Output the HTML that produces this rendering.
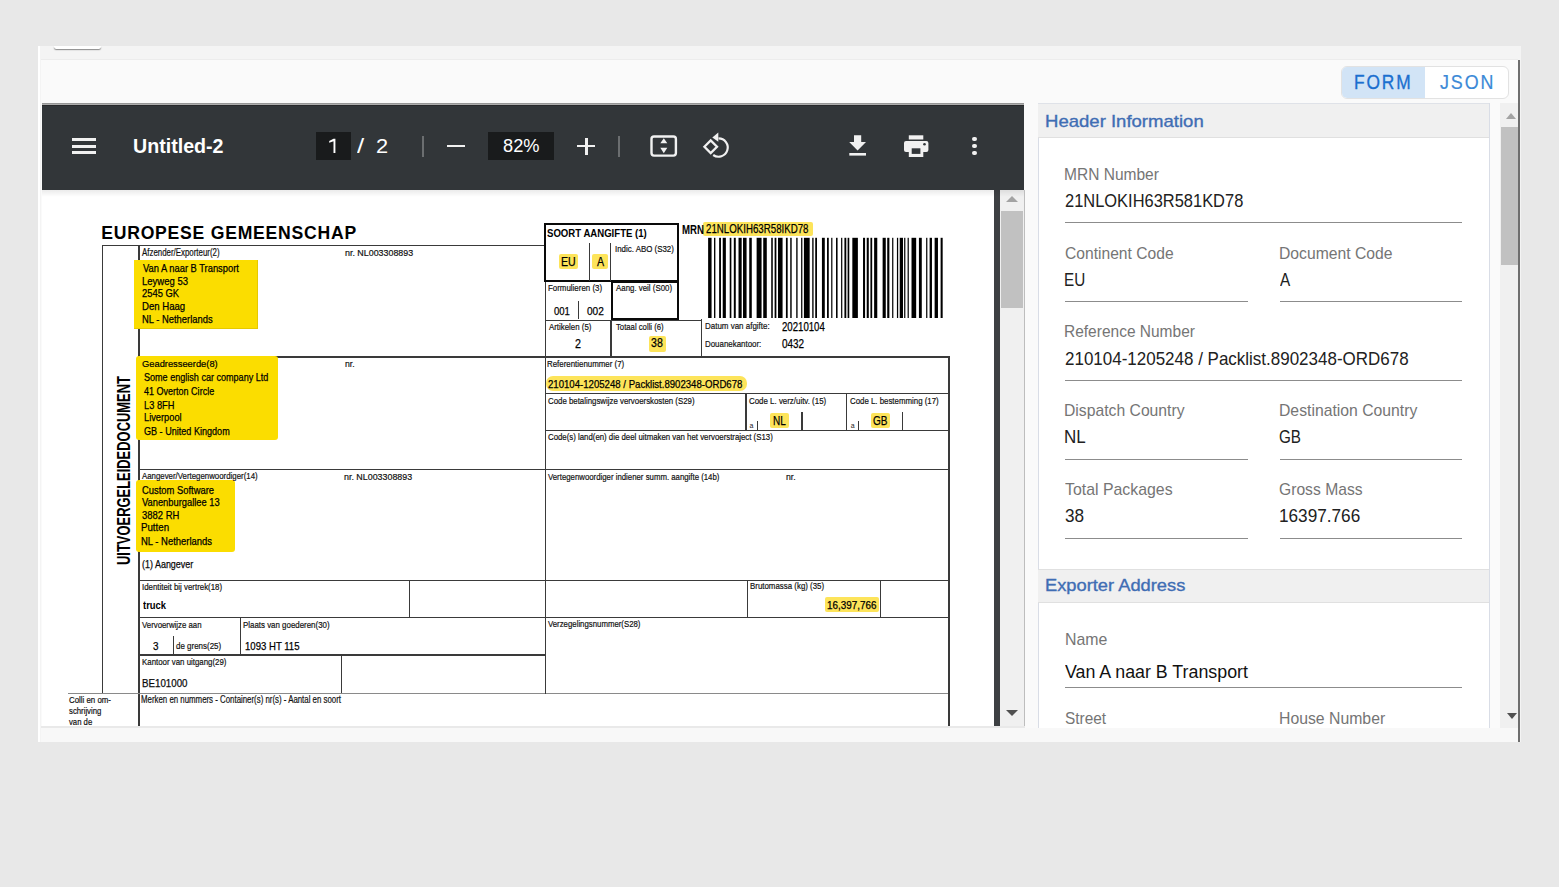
<!DOCTYPE html>
<html><head><meta charset="utf-8"><style>
html,body{margin:0;padding:0;}
body{width:1559px;height:887px;background:#e8e8e8;position:relative;overflow:hidden;font-family:"Liberation Sans",sans-serif;}
.r{position:absolute;box-sizing:border-box;}
svg.r{box-sizing:content-box;}
.t{position:absolute;white-space:nowrap;transform-origin:0 50%;}
</style></head><body>
<div class="r" style="left:38px;top:46px;width:1483px;height:696px;background:#f4f4f4;"></div>
<div class="r" style="left:38px;top:46px;width:2px;height:696px;background:#ffffff;"></div>
<div class="r" style="left:41px;top:59px;width:1477px;height:1px;background:#ececec;"></div>
<div class="r" style="left:41px;top:60px;width:1477px;height:668px;background:#fafafa;"></div>
<div class="r" style="left:41px;top:728px;width:1477px;height:14px;background:#f8f8f8;"></div>
<div class="r" style="left:1518px;top:60px;width:2px;height:682px;background:#6e6e6e;"></div>
<div class="r" style="left:54.3px;top:46px;width:46.4px;height:3.4px;background:#fff;border-radius:0 0 2.5px 2.5px;box-shadow:0 1px 1.2px rgba(0,0,0,.45);"></div>
<div class="r" style="left:1340.5px;top:66px;width:168px;height:32.7px;background:#fff;border:1px solid #e2e2e2;border-radius:6px;overflow:hidden"><div style="position:absolute;left:0;top:0;width:83.5px;height:31px;background:#d2e4f6"></div></div>
<div class="t" style="left:1354.41px;top:70.29px;font-size:20.4px;line-height:24.48px;color:#1b6fcf;letter-spacing:2.2px;transform:scaleX(0.8498);-webkit-text-stroke:0.35px #1b6fcf">FORM</div>
<div class="t" style="left:1439.53px;top:70.29px;font-size:20.4px;line-height:24.48px;color:#3b89d7;letter-spacing:2.2px;transform:scaleX(0.8759);-webkit-text-stroke:0.2px #3b89d7">JSON</div>
<div class="r" style="left:42px;top:103px;width:982px;height:1px;background:#959595;"></div>
<div class="r" style="left:42px;top:104px;width:982px;height:1px;background:#adadad;"></div>
<div class="r" style="left:42px;top:105px;width:982px;height:1px;background:#28292b;"></div>
<div class="r" style="left:42px;top:106px;width:982px;height:84px;background:#323639;"></div>
<div class="r" style="left:42px;top:190px;width:952px;height:536px;background:#ffffff;"></div>
<div class="r" style="left:994px;top:190px;width:6px;height:536px;background:#3d4043;"></div>
<div class="r" style="left:1000px;top:190px;width:24px;height:536px;background:#f0f0f0;"></div>
<div class="r" style="left:1024px;top:190px;width:1px;height:536px;background:#bdbdbd;"></div>
<div class="r" style="left:41px;top:726px;width:984px;height:2px;background:#e9e9e9;"></div>
<div class="r" style="left:1001px;top:211px;width:22px;height:97px;background:#c1c1c1;"></div>
<div class="r" style="left:42px;top:190px;width:982px;height:7px;background:transparent;background:linear-gradient(rgba(0,0,0,.08),rgba(0,0,0,0));"></div>
<div class="r" style="left:1006px;top:196px;width:0;height:0;border-left:6px solid transparent;border-right:6px solid transparent;border-bottom:6px solid #a3a3a3"></div>
<div class="r" style="left:1006px;top:710px;width:0;height:0;border-left:6px solid transparent;border-right:6px solid transparent;border-top:6px solid #505050"></div>
<div class="r" style="left:72px;top:138px;width:24px;height:3px;background:#f1f1f1;"></div>
<div class="r" style="left:72px;top:145px;width:24px;height:3px;background:#f1f1f1;"></div>
<div class="r" style="left:72px;top:151px;width:24px;height:3px;background:#f1f1f1;"></div>
<div class="t" style="left:132.82px;top:133.67px;font-size:20px;line-height:24.00px;color:#fff;transform:scaleX(0.9812);font-weight:bold;">Untitled-2</div>
<div class="r" style="left:316px;top:132px;width:35px;height:28px;background:#191b1c;"></div>
<svg class="r" style="left:326px;top:136px" width="12" height="20" viewBox="0 0 12 20"><path d="M7.5 2.7 h1.9 v14.4 h-1.9 v-11.9 l-4.3 1.6 v-1.7z" fill="#fff"/></svg>
<div class="t" style="left:356.80px;top:134.94px;font-size:19.5px;line-height:23.40px;color:#fff;transform:scaleX(1.3187);">/</div>
<div class="t" style="left:375.91px;top:134.94px;font-size:19.5px;line-height:23.40px;color:#fff;transform:scaleX(1.1158);">2</div>
<div class="r" style="left:422px;top:136px;width:2px;height:21px;background:#6b6e70;"></div>
<div class="r" style="left:447.3px;top:144.5px;width:17.4px;height:2px;background:#f1f1f1;"></div>
<div class="r" style="left:488px;top:132px;width:66px;height:28px;background:#191b1c;"></div>
<div class="t" style="left:503.18px;top:135.96px;font-size:18px;line-height:21.60px;color:#fff;transform:scaleX(1.0127);">82%</div>
<div class="r" style="left:577px;top:144.5px;width:18px;height:2.5px;background:#f1f1f1;"></div>
<div class="r" style="left:585px;top:137.5px;width:2.5px;height:17px;background:#f1f1f1;"></div>
<div class="r" style="left:618px;top:136px;width:2px;height:21px;background:#6b6e70;"></div>
<svg class="r" style="left:645px;top:130px" width="36" height="32" viewBox="0 0 36 32"><rect x="6.5" y="6.5" width="24.4" height="19.1" rx="2.5" fill="none" stroke="#f1f1f1" stroke-width="2.4"/><path d="M18.8 8.2 l-3.5 5.1 h7z M18.8 23.3 l-3.5 -5.5 h7z" fill="#f1f1f1"/></svg>
<svg class="r" style="left:700px;top:130px" width="32" height="32" viewBox="0 0 32 32"><path d="M4.4 16.8 L10.7 10.5 L17 16.8 L10.7 23.1 Z" fill="none" stroke="#f1f1f1" stroke-width="2.3"/><path d="M18.5 8.3 A 9.2 9.2 0 1 1 13.2 25" fill="none" stroke="#f1f1f1" stroke-width="2.2"/><path d="M18.3 2.5 L12.3 7.6 L18.3 11.8 Z" fill="#f1f1f1"/></svg>
<svg class="r" style="left:845px;top:133px" width="26" height="26" viewBox="0 0 26 26"><path d="M9 2.3 h7.2 v6.6 h4.8 l-8.4 8.6 l-8.4 -8.6 h4.8z" fill="#f1f1f1"/><rect x="4.3" y="20" width="16.7" height="2.6" fill="#f1f1f1"/></svg>
<svg class="r" style="left:902px;top:133px" width="30" height="26" viewBox="0 0 30 26"><rect x="6.8" y="2.3" width="14.5" height="4.2" fill="#f1f1f1"/><rect x="2" y="7.9" width="24.4" height="11.1" rx="2" fill="#f1f1f1"/><rect x="6.8" y="13" width="14.5" height="11" fill="#f1f1f1"/><rect x="9.7" y="15.3" width="8.7" height="5.6" fill="#323639"/><circle cx="22.5" cy="11.3" r="1.3" fill="#323639"/></svg>
<div class="r" style="left:972px;top:136.8px;width:4.6px;height:4.6px;border-radius:50%;background:#f1f1f1"></div>
<div class="r" style="left:972px;top:143.8px;width:4.6px;height:4.6px;border-radius:50%;background:#f1f1f1"></div>
<div class="r" style="left:972px;top:150.8px;width:4.6px;height:4.6px;border-radius:50%;background:#f1f1f1"></div>
<div class="t" style="left:101.26px;top:222.84px;font-size:17.6px;line-height:21.12px;color:#000;letter-spacing:0.76px;font-weight:bold;">EUROPESE GEMEENSCHAP</div>
<div class="r" style="left:102px;top:245px;width:443px;height:1px;background:#3a3a3a;"></div>
<div class="r" style="left:101.5px;top:245px;width:1.5px;height:448px;background:#3a3a3a;"></div>
<div class="r" style="left:138px;top:245px;width:1.5px;height:481px;background:#3a3a3a;"></div>
<div class="r" style="left:139px;top:356.2px;width:810px;height:1.4px;background:#3a3a3a;"></div>
<div class="r" style="left:139px;top:468.8px;width:810px;height:1.4px;background:#3a3a3a;"></div>
<div class="r" style="left:139px;top:579.8px;width:810px;height:1.4px;background:#3a3a3a;"></div>
<div class="r" style="left:746.5px;top:579.8px;width:1.4px;height:37.700000000000045px;background:#3a3a3a;"></div>
<div class="r" style="left:879.5px;top:579.8px;width:1.4px;height:37.700000000000045px;background:#3a3a3a;"></div>
<div class="r" style="left:409px;top:580px;width:1.4px;height:38px;background:#3a3a3a;"></div>
<div class="r" style="left:139px;top:616.9px;width:810px;height:1.4px;background:#3a3a3a;"></div>
<div class="r" style="left:240px;top:617px;width:1.4px;height:38px;background:#3a3a3a;"></div>
<div class="r" style="left:173px;top:636.2px;width:1.4px;height:18.799999999999955px;background:#3a3a3a;"></div>
<div class="r" style="left:139px;top:654.2px;width:406px;height:1.4px;background:#3a3a3a;"></div>
<div class="r" style="left:341px;top:655px;width:1.4px;height:38.5px;background:#3a3a3a;"></div>
<div class="r" style="left:68px;top:693px;width:881px;height:1px;background:#8a8a8a;"></div>
<div class="r" style="left:948px;top:356px;width:1.5px;height:370px;background:#3a3a3a;"></div>
<div class="r" style="left:544.5px;top:245px;width:1.4px;height:448.5px;background:#3a3a3a;"></div>
<div class="r" style="left:544.4px;top:223px;width:134.6px;height:59px;border:2px solid #0a0a0a"></div>
<div class="r" style="left:589.2px;top:243px;width:1.2px;height:38px;background:#3a3a3a;"></div>
<div class="r" style="left:610.3px;top:243px;width:1.2px;height:38px;background:#3a3a3a;"></div>
<div class="r" style="left:610.8px;top:280.8px;width:68px;height:39px;border:2px solid #0a0a0a"></div>
<div class="r" style="left:577.6px;top:301.3px;width:1.3px;height:18.19999999999999px;background:#3a3a3a;"></div>
<div class="r" style="left:545px;top:319.5px;width:156.5px;height:1.2px;background:#3a3a3a;"></div>
<div class="r" style="left:610.2px;top:319.5px;width:1.4px;height:37.0px;background:#3a3a3a;"></div>
<div class="r" style="left:700.8px;top:319px;width:1.5px;height:37.5px;background:#3a3a3a;"></div>
<div class="r" style="left:545px;top:393px;width:404px;height:1.4px;background:#3a3a3a;"></div>
<div class="r" style="left:745.2px;top:393px;width:1.4px;height:37.5px;background:#3a3a3a;"></div>
<div class="r" style="left:757px;top:421.3px;width:1.3px;height:8.699999999999989px;background:#3a3a3a;"></div>
<div class="r" style="left:801.2px;top:412.2px;width:1.4px;height:17.80000000000001px;background:#3a3a3a;"></div>
<div class="r" style="left:846.1px;top:393px;width:1.4px;height:37.5px;background:#3a3a3a;"></div>
<div class="r" style="left:858px;top:421.3px;width:1.3px;height:8.699999999999989px;background:#3a3a3a;"></div>
<div class="r" style="left:901.8px;top:412.2px;width:1.4px;height:17.80000000000001px;background:#3a3a3a;"></div>
<div class="r" style="left:545px;top:429.8px;width:404px;height:1.4px;background:#3a3a3a;"></div>
<div class="r" style="left:134.3px;top:260px;width:123.7px;height:69.4px;background:#fbdd00;box-shadow:inset -1px -1px 0 #e6c900"></div>
<div class="r" style="left:135.5px;top:356.2px;width:142.3px;height:84.3px;background:#fbdd00;border-radius:3px"></div>
<div class="r" style="left:135.5px;top:480.1px;width:99.6px;height:71.9px;background:#fbdd00;border-radius:3px"></div>
<div class="r" style="left:546px;top:376.2px;width:201px;height:15.3px;background:#fde45a;border-radius:7px"></div>
<div class="r" style="left:703px;top:221.8px;width:109.5px;height:14.6px;background:#fde45a;border-radius:2px"></div>
<div class="r" style="left:559.2px;top:254.1px;width:19px;height:14.8px;background:#fde45a;border-radius:2px"></div>
<div class="r" style="left:592.2px;top:254.1px;width:16.3px;height:14.8px;background:#fde45a;border-radius:2px"></div>
<div class="r" style="left:649px;top:336.1px;width:16.5px;height:15.6px;background:#fde45a;border-radius:2px"></div>
<div class="r" style="left:769.6px;top:413.2px;width:19.1px;height:15.2px;background:#fde45a;border-radius:2px"></div>
<div class="r" style="left:871.3px;top:413.2px;width:18.9px;height:15.2px;background:#fde45a;border-radius:2px"></div>
<div class="r" style="left:825.2px;top:597.3px;width:54.2px;height:14.8px;background:#fde45a;border-radius:2px"></div>
<div class="t" style="left:142.00px;top:246.93px;font-size:10.000000000000002px;line-height:12.00px;color:#1a1a1a;transform:scaleX(0.7887);-webkit-text-stroke:0.2px #000;">Afzender/Exporteur(2)</div>
<div class="t" style="left:344.62px;top:246.98px;font-size:9.420289855072465px;line-height:11.30px;color:#1a1a1a;transform:scaleX(0.9444);-webkit-text-stroke:0.2px #000;">nr. NL003308893</div>
<div class="t" style="left:142.75px;top:261.84px;font-size:11.159420289855074px;line-height:13.39px;color:#000;transform:scaleX(0.8380);-webkit-text-stroke:0.25px #000;">Van A naar B Transport</div>
<div class="t" style="left:142.04px;top:274.62px;font-size:11.159420289855074px;line-height:13.39px;color:#000;transform:scaleX(0.8552);-webkit-text-stroke:0.25px #000;">Leyweg 53</div>
<div class="t" style="left:142.33px;top:287.40px;font-size:11.159420289855074px;line-height:13.39px;color:#000;transform:scaleX(0.8419);-webkit-text-stroke:0.25px #000;">2545 GK</div>
<div class="t" style="left:142.03px;top:300.18px;font-size:11.159420289855074px;line-height:13.39px;color:#000;transform:scaleX(0.8601);-webkit-text-stroke:0.25px #000;">Den Haag</div>
<div class="t" style="left:142.05px;top:312.96px;font-size:11.159420289855074px;line-height:13.39px;color:#000;transform:scaleX(0.8423);-webkit-text-stroke:0.25px #000;">NL - Netherlands</div>
<div class="t" style="left:547.21px;top:225.79px;font-size:11.73913043478261px;line-height:14.09px;color:#000;transform:scaleX(0.8180);font-weight:bold;">SOORT AANGIFTE (1)</div>
<div class="t" style="left:681.67px;top:222.55px;font-size:11.884057971014492px;line-height:14.26px;color:#000;transform:scaleX(0.8120);font-weight:bold;">MRN</div>
<div class="t" style="left:706.11px;top:222.20px;font-size:12.46376811594203px;line-height:14.96px;color:#000;transform:scaleX(0.7793);-webkit-text-stroke:0.25px #000;">21NLOKIH63R58IKD78</div>
<div class="t" style="left:561.05px;top:254.84px;font-size:12.318840579710146px;line-height:14.78px;color:#000;transform:scaleX(0.8580);-webkit-text-stroke:0.25px #000;">EU</div>
<div class="t" style="left:596.90px;top:254.84px;font-size:12.318840579710146px;line-height:14.78px;color:#000;transform:scaleX(0.8667);-webkit-text-stroke:0.25px #000;">A</div>
<div class="t" style="left:614.79px;top:243.96px;font-size:9.130434782608695px;line-height:10.96px;color:#1a1a1a;transform:scaleX(0.8663);-webkit-text-stroke:0.2px #000;">Indic. ABO (S32)</div>
<div class="t" style="left:548.37px;top:283.20px;font-size:8.985507246376812px;line-height:10.78px;color:#1a1a1a;transform:scaleX(0.8817);-webkit-text-stroke:0.2px #000;">Formulieren (3)</div>
<div class="t" style="left:616.30px;top:283.20px;font-size:8.985507246376812px;line-height:10.78px;color:#1a1a1a;transform:scaleX(0.8777);-webkit-text-stroke:0.2px #000;">Aang. veil (S00)</div>
<div class="t" style="left:553.52px;top:303.69px;font-size:11.73913043478261px;line-height:14.09px;color:#000;transform:scaleX(0.8141);-webkit-text-stroke:0.25px #000;">001</div>
<div class="t" style="left:586.80px;top:303.69px;font-size:11.73913043478261px;line-height:14.09px;color:#000;transform:scaleX(0.8600);-webkit-text-stroke:0.25px #000;">002</div>
<div class="t" style="left:549.00px;top:321.35px;font-size:9.565217391304348px;line-height:11.48px;color:#1a1a1a;transform:scaleX(0.8238);-webkit-text-stroke:0.2px #000;">Artikelen (5)</div>
<div class="t" style="left:616.15px;top:321.35px;font-size:9.565217391304348px;line-height:11.48px;color:#1a1a1a;transform:scaleX(0.8092);-webkit-text-stroke:0.2px #000;">Totaal colli (6)</div>
<div class="t" style="left:575.16px;top:336.50px;font-size:12.46376811594203px;line-height:14.96px;color:#000;transform:scaleX(0.8640);-webkit-text-stroke:0.25px #000;">2</div>
<div class="t" style="left:650.68px;top:336.30px;font-size:12.46376811594203px;line-height:14.96px;color:#000;transform:scaleX(0.8491);-webkit-text-stroke:0.25px #000;">38</div>
<div class="t" style="left:705.16px;top:319.67px;font-size:9.855072463768117px;line-height:11.83px;color:#1a1a1a;transform:scaleX(0.8097);-webkit-text-stroke:0.2px #000;">Datum van afgifte:</div>
<div class="t" style="left:782.02px;top:319.91px;font-size:12.028985507246379px;line-height:14.43px;color:#000;transform:scaleX(0.8009);-webkit-text-stroke:0.25px #000;">20210104</div>
<div class="t" style="left:705.17px;top:338.17px;font-size:9.855072463768117px;line-height:11.83px;color:#1a1a1a;transform:scaleX(0.8036);-webkit-text-stroke:0.2px #000;">Douanekantoor:</div>
<div class="t" style="left:782.10px;top:336.68px;font-size:12.173913043478262px;line-height:14.61px;color:#000;transform:scaleX(0.8176);-webkit-text-stroke:0.25px #000;">0432</div>
<div class="t" style="left:142.43px;top:358.05px;font-size:9.565217391304348px;line-height:11.48px;color:#000;transform:scaleX(0.9769);-webkit-text-stroke:0.2px #000;">Geadresseerde(8)</div>
<div class="t" style="left:143.89px;top:371.45px;font-size:10.724637681159422px;line-height:12.87px;color:#000;transform:scaleX(0.8448);-webkit-text-stroke:0.25px #000;">Some english car company Ltd</div>
<div class="t" style="left:144.12px;top:385.25px;font-size:10.724637681159422px;line-height:12.87px;color:#000;transform:scaleX(0.8412);-webkit-text-stroke:0.25px #000;">41 Overton Circle</div>
<div class="t" style="left:143.56px;top:398.55px;font-size:10.724637681159422px;line-height:12.87px;color:#000;transform:scaleX(0.8651);-webkit-text-stroke:0.25px #000;">L3 8FH</div>
<div class="t" style="left:143.56px;top:411.25px;font-size:10.724637681159422px;line-height:12.87px;color:#000;transform:scaleX(0.8657);-webkit-text-stroke:0.25px #000;">Liverpool</div>
<div class="t" style="left:143.85px;top:424.75px;font-size:10.724637681159422px;line-height:12.87px;color:#000;transform:scaleX(0.8460);-webkit-text-stroke:0.25px #000;">GB - United Kingdom</div>
<div class="t" style="left:344.64px;top:357.95px;font-size:9.565217391304348px;line-height:11.48px;color:#1a1a1a;transform:scaleX(0.9086);-webkit-text-stroke:0.2px #000;">nr.</div>
<div class="t" style="left:142.00px;top:470.76px;font-size:9.130434782608695px;line-height:10.96px;color:#1a1a1a;transform:scaleX(0.8601);-webkit-text-stroke:0.2px #000;">Aangever/Vertegenwoordiger(14)</div>
<div class="t" style="left:344.32px;top:471.38px;font-size:9.420289855072465px;line-height:11.30px;color:#1a1a1a;transform:scaleX(0.9444);-webkit-text-stroke:0.2px #000;">nr. NL003308893</div>
<div class="t" style="left:141.53px;top:484.76px;font-size:10.289855072463768px;line-height:12.35px;color:#000;transform:scaleX(0.9147);-webkit-text-stroke:0.25px #000;">Custom Software</div>
<div class="t" style="left:141.95px;top:497.26px;font-size:10.289855072463768px;line-height:12.35px;color:#000;transform:scaleX(0.9090);-webkit-text-stroke:0.25px #000;">Vanenburgallee 13</div>
<div class="t" style="left:141.62px;top:509.76px;font-size:10.289855072463768px;line-height:12.35px;color:#000;transform:scaleX(0.9197);-webkit-text-stroke:0.25px #000;">3882 RH</div>
<div class="t" style="left:141.22px;top:522.46px;font-size:10.289855072463768px;line-height:12.35px;color:#000;transform:scaleX(0.9453);-webkit-text-stroke:0.25px #000;">Putten</div>
<div class="t" style="left:141.24px;top:535.96px;font-size:10.289855072463768px;line-height:12.35px;color:#000;transform:scaleX(0.9200);-webkit-text-stroke:0.25px #000;">NL - Netherlands</div>
<div class="t" style="left:141.76px;top:557.75px;font-size:10.724637681159422px;line-height:12.87px;color:#111;transform:scaleX(0.8351);-webkit-text-stroke:0.25px #000;">(1) Aangever</div>
<div class="t" style="left:141.79px;top:581.52px;font-size:9.275362318840582px;line-height:11.13px;color:#1a1a1a;transform:scaleX(0.8500);-webkit-text-stroke:0.2px #000;">Identiteit bij vertrek(18)</div>
<div class="t" style="left:142.91px;top:598.57px;font-size:11.01449275362319px;line-height:13.22px;color:#000;transform:scaleX(0.8576);font-weight:bold;">truck</div>
<div class="t" style="left:142.46px;top:618.65px;font-size:9.565217391304348px;line-height:11.48px;color:#1a1a1a;transform:scaleX(0.8189);-webkit-text-stroke:0.2px #000;">Vervoerwijze aan</div>
<div class="t" style="left:243.17px;top:618.65px;font-size:9.565217391304348px;line-height:11.48px;color:#1a1a1a;transform:scaleX(0.8279);-webkit-text-stroke:0.2px #000;">Plaats van goederen(30)</div>
<div class="t" style="left:153.20px;top:640.05px;font-size:10.724637681159422px;line-height:12.87px;color:#000;transform:scaleX(0.9226);-webkit-text-stroke:0.25px #000;">3</div>
<div class="t" style="left:176.28px;top:640.82px;font-size:9.275362318840582px;line-height:11.13px;color:#1a1a1a;transform:scaleX(0.8602);-webkit-text-stroke:0.2px #000;">de grens(25)</div>
<div class="t" style="left:244.68px;top:639.77px;font-size:11.01449275362319px;line-height:13.22px;color:#000;transform:scaleX(0.8713);-webkit-text-stroke:0.25px #000;">1093 HT 115</div>
<div class="t" style="left:141.87px;top:656.05px;font-size:9.565217391304348px;line-height:11.48px;color:#1a1a1a;transform:scaleX(0.8247);-webkit-text-stroke:0.2px #000;">Kantoor van uitgang(29)</div>
<div class="t" style="left:142.22px;top:677.14px;font-size:11.159420289855074px;line-height:13.39px;color:#111;transform:scaleX(0.8735);-webkit-text-stroke:0.25px #000;">BE101000</div>
<div class="t" style="left:68.81px;top:694.96px;font-size:9.130434782608695px;line-height:10.96px;color:#1a1a1a;transform:scaleX(0.8611);-webkit-text-stroke:0.2px #000;">Colli en om-</div>
<div class="t" style="left:68.97px;top:706.06px;font-size:9.130434782608695px;line-height:10.96px;color:#1a1a1a;transform:scaleX(0.8504);-webkit-text-stroke:0.2px #000;">schrijving</div>
<div class="t" style="left:69.16px;top:717.46px;font-size:9.130434782608695px;line-height:10.96px;color:#1a1a1a;transform:scaleX(0.8465);-webkit-text-stroke:0.2px #000;">van de</div>
<div class="t" style="left:141.37px;top:693.74px;font-size:10.000000000000002px;line-height:12.00px;color:#1a1a1a;transform:scaleX(0.7857);-webkit-text-stroke:0.2px #000;">Merken en nummers - Container(s) nr(s) - Aantal en soort</div>
<div class="t" style="left:547.47px;top:358.66px;font-size:9.130434782608695px;line-height:10.96px;color:#1a1a1a;transform:scaleX(0.8646);-webkit-text-stroke:0.2px #000;">Referentienummer (7)</div>
<div class="t" style="left:548.02px;top:378.05px;font-size:10.724637681159422px;line-height:12.87px;color:#000;transform:scaleX(0.8961);-webkit-text-stroke:0.25px #000;">210104-1205248 / Packlist.8902348-ORD678</div>
<div class="t" style="left:547.71px;top:395.18px;font-size:9.420289855072465px;line-height:11.30px;color:#1a1a1a;transform:scaleX(0.8342);-webkit-text-stroke:0.2px #000;">Code betalingswijze vervoerskosten (S29)</div>
<div class="t" style="left:748.70px;top:394.78px;font-size:9.420289855072465px;line-height:11.30px;color:#1a1a1a;transform:scaleX(0.8404);-webkit-text-stroke:0.2px #000;">Code L. verz/uitv. (15)</div>
<div class="t" style="left:749.42px;top:422.27px;font-size:7px;line-height:8.40px;color:#1a1a1a;">a</div>
<div class="t" style="left:772.60px;top:413.09px;font-size:12.898550724637683px;line-height:15.48px;color:#000;transform:scaleX(0.7786);-webkit-text-stroke:0.25px #000;">NL</div>
<div class="t" style="left:849.71px;top:394.78px;font-size:9.420289855072465px;line-height:11.30px;color:#1a1a1a;transform:scaleX(0.8354);-webkit-text-stroke:0.2px #000;">Code L. bestemming (17)</div>
<div class="t" style="left:850.82px;top:422.27px;font-size:7px;line-height:8.40px;color:#1a1a1a;">a</div>
<div class="t" style="left:873.10px;top:413.09px;font-size:12.898550724637683px;line-height:15.48px;color:#000;transform:scaleX(0.7782);-webkit-text-stroke:0.25px #000;">GB</div>
<div class="t" style="left:547.61px;top:432.16px;font-size:9.130434782608695px;line-height:10.96px;color:#1a1a1a;transform:scaleX(0.8571);-webkit-text-stroke:0.2px #000;">Code(s) land(en) die deel uitmaken van het vervoerstraject (S13)</div>
<div class="t" style="left:547.96px;top:470.75px;font-size:9.565217391304348px;line-height:11.48px;color:#1a1a1a;transform:scaleX(0.8176);-webkit-text-stroke:0.2px #000;">Vertegenwoordiger indiener summ. aangifte (14b)</div>
<div class="t" style="left:786.14px;top:470.75px;font-size:9.565217391304348px;line-height:11.48px;color:#1a1a1a;transform:scaleX(0.9086);-webkit-text-stroke:0.2px #000;">nr.</div>
<div class="t" style="left:749.77px;top:581.42px;font-size:9.275362318840582px;line-height:11.13px;color:#1a1a1a;transform:scaleX(0.8520);-webkit-text-stroke:0.2px #000;">Brutomassa (kg) (35)</div>
<div class="t" style="left:827.46px;top:598.54px;font-size:11.159420289855074px;line-height:13.39px;color:#000;transform:scaleX(0.8888);-webkit-text-stroke:0.25px #000;">16,397,766</div>
<div class="t" style="left:547.96px;top:618.52px;font-size:9.275362318840582px;line-height:11.13px;color:#1a1a1a;transform:scaleX(0.8427);-webkit-text-stroke:0.2px #000;">Verzegelingsnummer(S28)</div>
<div class="t" style="left:113.96px;top:564.60px;font-size:18.1px;line-height:21.72px;font-weight:bold;color:#000;transform-origin:0 0;transform:rotate(-90deg) scaleX(0.7147)">UITVOERGELEIDEDOCUMENT</div>
<svg class="r" style="left:0;top:0" width="1559" height="887"><rect x="708.12" y="237.8" width="3.45" height="80.2" fill="#000"/><rect x="714.02" y="237.8" width="1.35" height="80.2" fill="#000"/><rect x="719.12" y="237.8" width="1.85" height="80.2" fill="#000"/><rect x="722.72" y="237.8" width="3.15" height="80.2" fill="#000"/><rect x="729.72" y="237.8" width="1.65" height="80.2" fill="#000"/><rect x="733.82" y="237.8" width="1.95" height="80.2" fill="#000"/><rect x="738.52" y="237.8" width="3.15" height="80.2" fill="#000"/><rect x="743.02" y="237.8" width="3.55" height="80.2" fill="#000"/><rect x="749.23" y="237.8" width="2.55" height="80.2" fill="#000"/><rect x="756.62" y="237.8" width="4.95" height="80.2" fill="#000"/><rect x="763.23" y="237.8" width="3.55" height="80.2" fill="#000"/><rect x="771.23" y="237.8" width="1.55" height="80.2" fill="#000"/><rect x="774.62" y="237.8" width="1.75" height="80.2" fill="#000"/><rect x="778.02" y="237.8" width="4.55" height="80.2" fill="#000"/><rect x="785.92" y="237.8" width="1.75" height="80.2" fill="#000"/><rect x="790.23" y="237.8" width="1.45" height="80.2" fill="#000"/><rect x="796.23" y="237.8" width="1.35" height="80.2" fill="#000"/><rect x="801.12" y="237.8" width="1.25" height="80.2" fill="#000"/><rect x="803.92" y="237.8" width="5.75" height="80.2" fill="#000"/><rect x="812.23" y="237.8" width="1.35" height="80.2" fill="#000"/><rect x="815.23" y="237.8" width="1.75" height="80.2" fill="#000"/><rect x="821.93" y="237.8" width="2.85" height="80.2" fill="#000"/><rect x="827.02" y="237.8" width="1.75" height="80.2" fill="#000"/><rect x="831.20" y="237.8" width="1.20" height="80.2" fill="#000"/><rect x="836.02" y="237.8" width="1.55" height="80.2" fill="#000"/><rect x="841.10" y="237.8" width="1.20" height="80.2" fill="#000"/><rect x="844.43" y="237.8" width="1.85" height="80.2" fill="#000"/><rect x="847.62" y="237.8" width="1.65" height="80.2" fill="#000"/><rect x="852.33" y="237.8" width="5.55" height="80.2" fill="#000"/><rect x="863.02" y="237.8" width="2.05" height="80.2" fill="#000"/><rect x="866.73" y="237.8" width="2.05" height="80.2" fill="#000"/><rect x="870.42" y="237.8" width="1.75" height="80.2" fill="#000"/><rect x="874.12" y="237.8" width="3.15" height="80.2" fill="#000"/><rect x="882.62" y="237.8" width="3.15" height="80.2" fill="#000"/><rect x="887.22" y="237.8" width="2.15" height="80.2" fill="#000"/><rect x="892.15" y="237.8" width="1.20" height="80.2" fill="#000"/><rect x="896.92" y="237.8" width="1.25" height="80.2" fill="#000"/><rect x="899.73" y="237.8" width="3.25" height="80.2" fill="#000"/><rect x="904.15" y="237.8" width="1.20" height="80.2" fill="#000"/><rect x="907.60" y="237.8" width="1.20" height="80.2" fill="#000"/><rect x="911.52" y="237.8" width="4.65" height="80.2" fill="#000"/><rect x="918.93" y="237.8" width="2.85" height="80.2" fill="#000"/><rect x="926.15" y="237.8" width="1.20" height="80.2" fill="#000"/><rect x="929.62" y="237.8" width="2.35" height="80.2" fill="#000"/><rect x="934.62" y="237.8" width="3.35" height="80.2" fill="#000"/><rect x="940.62" y="237.8" width="2.05" height="80.2" fill="#000"/></svg>
<div class="r" style="left:1038px;top:103px;width:451px;height:625px;background:#ffffff;"></div>
<div class="r" style="left:1037.5px;top:103px;width:1px;height:625px;background:#d9dde6;"></div>
<div class="r" style="left:1488.5px;top:103px;width:1px;height:625px;background:#d9dde6;"></div>
<div class="r" style="left:1038px;top:103px;width:451px;height:1px;background:#dfe2e8;"></div>
<div class="r" style="left:1038px;top:104px;width:451px;height:33.5px;background:#f0f0f0;"></div>
<div class="r" style="left:1038px;top:137px;width:451px;height:1px;background:#e0e0e0;"></div>
<div class="t" style="left:1044.62px;top:112.11px;font-size:17px;line-height:20.40px;color:#3f6db4;transform:scaleX(1.0905);-webkit-text-stroke:0.35px #3f6db4;">Header Information</div>
<div class="t" style="left:1064.36px;top:164.87px;font-size:16.2px;line-height:19.44px;color:#757575;transform:scaleX(0.9595);">MRN Number</div>
<div class="t" style="left:1064.78px;top:190.95px;font-size:17.8px;line-height:21.36px;color:#212121;transform:scaleX(0.9250);">21NLOKIH63R581KD78</div>
<div class="r" style="left:1065px;top:222.3px;width:397px;height:1px;background:#8c8c8c;"></div>
<div class="t" style="left:1064.62px;top:243.67px;font-size:16.2px;line-height:19.44px;color:#757575;transform:scaleX(0.9653);">Continent Code</div>
<div class="t" style="left:1064.18px;top:269.75px;font-size:17.8px;line-height:21.36px;color:#212121;transform:scaleX(0.8587);">EU</div>
<div class="r" style="left:1065px;top:301.09999999999997px;width:182.5px;height:1px;background:#8c8c8c;"></div>
<div class="t" style="left:1278.64px;top:243.67px;font-size:16.2px;line-height:19.44px;color:#757575;transform:scaleX(0.9703);">Document Code</div>
<div class="t" style="left:1279.90px;top:269.75px;font-size:17.8px;line-height:21.36px;color:#212121;transform:scaleX(0.8617);">A</div>
<div class="r" style="left:1279.6px;top:301.09999999999997px;width:182.5px;height:1px;background:#8c8c8c;"></div>
<div class="t" style="left:1064.16px;top:322.47px;font-size:16.2px;line-height:19.44px;color:#757575;transform:scaleX(0.9573);">Reference Number</div>
<div class="t" style="left:1064.55px;top:348.55px;font-size:17.8px;line-height:21.36px;color:#212121;transform:scaleX(0.9549);">210104-1205248 / Packlist.8902348-ORD678</div>
<div class="r" style="left:1065px;top:379.9px;width:397px;height:1px;background:#8c8c8c;"></div>
<div class="t" style="left:1064.34px;top:401.27px;font-size:16.2px;line-height:19.44px;color:#757575;transform:scaleX(0.9711);">Dispatch Country</div>
<div class="t" style="left:1064.24px;top:427.35px;font-size:17.8px;line-height:21.36px;color:#212121;transform:scaleX(0.9548);">NL</div>
<div class="r" style="left:1065px;top:458.69999999999993px;width:182.5px;height:1px;background:#8c8c8c;"></div>
<div class="t" style="left:1278.64px;top:401.27px;font-size:16.2px;line-height:19.44px;color:#757575;transform:scaleX(0.9728);">Destination Country</div>
<div class="t" style="left:1279.14px;top:427.35px;font-size:17.8px;line-height:21.36px;color:#212121;transform:scaleX(0.8563);">GB</div>
<div class="r" style="left:1279.6px;top:458.69999999999993px;width:182.5px;height:1px;background:#8c8c8c;"></div>
<div class="t" style="left:1065.08px;top:480.07px;font-size:16.2px;line-height:19.44px;color:#757575;transform:scaleX(0.9803);">Total Packages</div>
<div class="t" style="left:1064.71px;top:506.15px;font-size:17.8px;line-height:21.36px;color:#212121;transform:scaleX(0.9654);">38</div>
<div class="r" style="left:1065px;top:537.5px;width:182.5px;height:1px;background:#8c8c8c;"></div>
<div class="t" style="left:1279.12px;top:480.07px;font-size:16.2px;line-height:19.44px;color:#757575;transform:scaleX(0.9677);">Gross Mass</div>
<div class="t" style="left:1278.61px;top:506.15px;font-size:17.8px;line-height:21.36px;color:#212121;transform:scaleX(0.9664);">16397.766</div>
<div class="r" style="left:1279.6px;top:537.5px;width:182.5px;height:1px;background:#8c8c8c;"></div>
<div class="r" style="left:1038px;top:569px;width:451px;height:1px;background:#e0e0e0;"></div>
<div class="r" style="left:1038px;top:570px;width:451px;height:32px;background:#f0f0f0;"></div>
<div class="r" style="left:1038px;top:602px;width:451px;height:1px;background:#e0e0e0;"></div>
<div class="t" style="left:1045.04px;top:575.91px;font-size:17px;line-height:20.40px;color:#3f6db4;transform:scaleX(1.0760);-webkit-text-stroke:0.35px #3f6db4;">Exporter Address</div>
<div class="t" style="left:1064.53px;top:630.37px;font-size:16.2px;line-height:19.44px;color:#757575;transform:scaleX(0.9818);">Name</div>
<div class="t" style="left:1065.31px;top:661.00px;font-size:18.7px;line-height:22.44px;color:#111;transform:scaleX(0.9538);">Van A naar B Transport</div>
<div class="r" style="left:1065px;top:687px;width:397px;height:1px;background:#8c8c8c;"></div>
<div class="t" style="left:1064.81px;top:708.87px;font-size:16.2px;line-height:19.44px;color:#757575;transform:scaleX(0.9513);">Street</div>
<div class="t" style="left:1278.54px;top:708.87px;font-size:16.2px;line-height:19.44px;color:#757575;transform:scaleX(0.9755);">House Number</div>
<div class="r" style="left:1500px;top:103px;width:18px;height:625px;background:#f0f0f0;"></div>
<div class="r" style="left:1501px;top:127px;width:17px;height:138px;background:#c1c1c1;"></div>
<div class="r" style="left:1506px;top:112.5px;width:0;height:0;border-left:5.5px solid transparent;border-right:5.5px solid transparent;border-bottom:6px solid #a3a3a3"></div>
<div class="r" style="left:1506.5px;top:712.5px;width:0;height:0;border-left:5.5px solid transparent;border-right:5.5px solid transparent;border-top:6px solid #505050"></div>
</body></html>
